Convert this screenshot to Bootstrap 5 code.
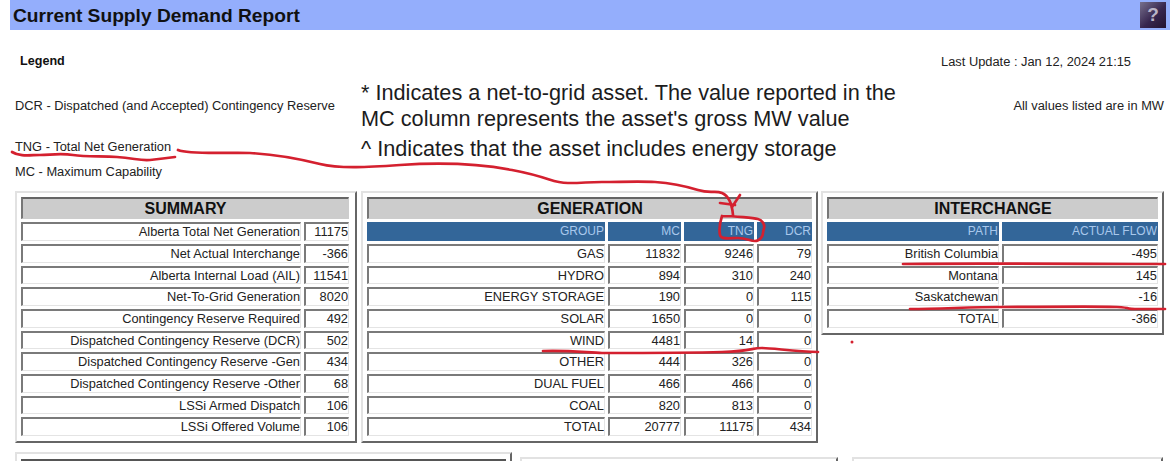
<!DOCTYPE html>
<html lang="en">
<head>
<meta charset="utf-8">
<title>Current Supply Demand Report</title>
<link href="https://cdn.jsdelivr.net/npm/bootstrap@5.3.0/dist/css/bootstrap.min.css" rel="stylesheet">
<style>
html,body{height:461px;overflow:hidden;background:#fff}
body{position:relative;font-family:"Liberation Sans",Arial,sans-serif;color:#222;font-size:12.85px;line-height:1.15}
.title-bar{margin-left:10px;margin-right:2px;height:30px;background:#94aefc;padding:0 4px 0 3px}
.title-bar h1{font-size:19.2px;font-weight:700;margin:0;color:#111;line-height:31px}
.help-btn{width:26px;height:26px;padding:0;border:0;border-radius:0;color:#b9b3c6;font-weight:700;font-size:19px;line-height:26px;background:linear-gradient(135deg,#77708c,#37264f 55%,#22122f)}
.legend-top{padding:23px 41px 0 20px;height:52px}
.legend-top b{font-size:12.6px;color:#111;padding-top:1px}
.legend-top span{padding-top:2px}
.legend-body{padding-left:15px;padding-right:8px;height:109px}
.legend-col{width:346px;flex:none}
.leg-a{margin-top:17px}.leg-b{margin-top:26px}.leg-c{margin-top:10px}
.notes{width:560px;flex:none;font-size:21.7px;line-height:26px;color:#1c1c1c;margin-top:-2px}
.notes p{margin:0}
.notes p:last-child{margin-top:4px}
.mw-note{padding-top:17px}
.panels{padding-left:15px;gap:4px}
.pnl{flex:none;border:2px solid;border-color:#e2e2e2 #666 #666 #e2e2e2;padding:1px 1px 2px}
.pnl-a{width:342px}.pnl-b{width:457px}.pnl-c{width:343px;margin-left:-1px}
.grid-tbl{border-collapse:separate;border-spacing:3px;table-layout:fixed;margin:0}
.grid-tbl td,.grid-tbl th{border-style:solid;border-width:2px 1px 1px 2px;border-color:#7a7a7a #e4e4e4 #e4e4e4 #7a7a7a;padding:0;text-align:right;font-size:12.8px;font-weight:400;height:18.67px;line-height:15.67px;white-space:nowrap;overflow:hidden;color:#222}
.grid-tbl th.head{background:#ccc;color:#111;text-align:center;font-weight:700;font-size:16px;height:22.3px;line-height:19px;border-color:#666 #ccc #ccc #777}
.grid-tbl th.blue{background:#336699;color:#a9c8ec;border-color:#336699;font-size:12px}
.w-a1{width:280px}.w-a2{width:45px}.w-a3{width:0}
.w-b1{width:238px}.w-b2{width:73px}.w-b3{width:70px}.w-b4{width:55px}
.w-c1{width:172px}.w-c2{width:156px}
.lower{gap:8px;padding-left:15px;margin-top:9px}
.low-pnl{flex:none;height:60px;border:2px solid;border-color:#e2e2e2 #666 #666 #e2e2e2;padding:5px 4px}
.low-a{width:497px}.low-b{width:318px;margin-top:5px;margin-right:6px}.low-c{width:311px;margin-top:5px}
.low-head{height:30px;background:#ccc;border-top:2px solid #555}
.ink{position:absolute;left:0;top:0;width:1172px;height:461px;pointer-events:none}
.ink path{fill:none;stroke:#d4202f;stroke-width:2.7;stroke-linecap:round;stroke-linejoin:round}
.ink circle{fill:#d4202f}
</style>
</head>
<body>
<header class="title-bar d-flex justify-content-between align-items-center">
  <h1>Current Supply Demand Report</h1>
  <button type="button" class="btn help-btn" aria-label="Help">?</button>
</header>

<div class="legend-top d-flex justify-content-between">
  <b>Legend</b>
  <span>Last Update : Jan 12, 2024 21:15</span>
</div>

<section class="legend-body d-flex">
  <div class="legend-col">
    <div class="leg-a">DCR - Dispatched (and Accepted) Contingency Reserve</div>
    <div class="leg-b">TNG - Total Net Generation</div>
    <div class="leg-c">MC - Maximum Capability</div>
  </div>
  <div class="notes">
    <p>* Indicates a net-to-grid asset. The value reported in the<br>MC column represents the asset's gross MW value</p>
    <p>^ Indicates that the asset includes energy storage</p>
  </div>
  <div class="mw-note flex-grow-1 text-end">All values listed are in MW</div>
</section>

<main class="panels d-flex align-items-start">
  <div class="pnl pnl-a">
    <table class="grid-tbl">
      <colgroup><col class="w-a1"><col class="w-a2"><col class="w-a3"></colgroup>
      <tr><th class="head" colspan="3">SUMMARY</th></tr>
      <tr><td>Alberta Total Net Generation</td><td>11175</td></tr>
      <tr><td>Net Actual Interchange</td><td>-366</td></tr>
      <tr><td>Alberta Internal Load (AIL)</td><td>11541</td></tr>
      <tr><td>Net-To-Grid Generation</td><td>8020</td></tr>
      <tr><td>Contingency Reserve Required</td><td>492</td></tr>
      <tr><td>Dispatched Contingency Reserve (DCR)</td><td>502</td></tr>
      <tr><td>Dispatched Contingency Reserve -Gen</td><td>434</td></tr>
      <tr><td>Dispatched Contingency Reserve -Other</td><td>68</td></tr>
      <tr><td>LSSi Armed Dispatch</td><td>106</td></tr>
      <tr><td>LSSi Offered Volume</td><td>106</td></tr>
    </table>
  </div>
  <div class="pnl pnl-b">
    <table class="grid-tbl">
      <colgroup><col class="w-b1"><col class="w-b2"><col class="w-b3"><col class="w-b4"></colgroup>
      <tr><th class="head" colspan="4">GENERATION</th></tr>
      <tr><th class="blue">GROUP</th><th class="blue">MC</th><th class="blue">TNG</th><th class="blue">DCR</th></tr>
      <tr><td>GAS</td><td>11832</td><td>9246</td><td>79</td></tr>
      <tr><td>HYDRO</td><td>894</td><td>310</td><td>240</td></tr>
      <tr><td>ENERGY STORAGE</td><td>190</td><td>0</td><td>115</td></tr>
      <tr><td>SOLAR</td><td>1650</td><td>0</td><td>0</td></tr>
      <tr><td>WIND</td><td>4481</td><td>14</td><td>0</td></tr>
      <tr><td>OTHER</td><td>444</td><td>326</td><td>0</td></tr>
      <tr><td>DUAL FUEL</td><td>466</td><td>466</td><td>0</td></tr>
      <tr><td>COAL</td><td>820</td><td>813</td><td>0</td></tr>
      <tr><td>TOTAL</td><td>20777</td><td>11175</td><td>434</td></tr>
    </table>
  </div>
  <div class="pnl pnl-c">
    <table class="grid-tbl">
      <colgroup><col class="w-c1"><col class="w-c2"></colgroup>
      <tr><th class="head" colspan="2">INTERCHANGE</th></tr>
      <tr><th class="blue">PATH</th><th class="blue">ACTUAL FLOW</th></tr>
      <tr><td>British Columbia</td><td>-495</td></tr>
      <tr><td>Montana</td><td>145</td></tr>
      <tr><td>Saskatchewan</td><td>-16</td></tr>
      <tr><td>TOTAL</td><td>-366</td></tr>
    </table>
  </div>
</main>

<section class="lower d-flex align-items-start">
  <div class="low-pnl low-a"><div class="low-head"></div></div>
  <div class="low-pnl low-b"></div>
  <div class="low-pnl low-c"></div>
</section>

<svg class="ink" viewBox="0 0 1172 461" aria-hidden="true">
  <path d="M12 152C20 157 30 155 40 155S60 153 73 155 100 156 117 157 140 161 150 160 168 158 175 157"/>
  <path d="M178 150C190 155 230 152 250 153S300 159 320 164 370 167 400 165 470 162 512 170 550 183 568 183 585 182 602 182 640 181 655 182 685 186 698 190 715 190 722 193 732 203 733 215"/>
  <path d="M740 195 732 207M720 203 735 205"/>
  <path d="M722 216C720 222 719 230 720 235S730 238 738 238 750 241 755 241 763 236 763 233 765 228 764 225 762 220 758 219 735 216 722 216"/>
  <path d="M543 351C570 350 590 353 602 353S690 353 722 352 750 348 762 348 795 352 818 352"/>
  <path d="M903 264C950 263 1100 264 1165 264"/>
  <path d="M910 309C940 309 970 307 1000 307S1100 306 1117 307 1125 309 1135 309 1165 309 1165 309"/>
  <circle cx="852" cy="342" r="1.5"/>
</svg>

<script src="https://cdn.jsdelivr.net/npm/bootstrap@5.3.0/dist/js/bootstrap.bundle.min.js"></script>
</body>
</html>
